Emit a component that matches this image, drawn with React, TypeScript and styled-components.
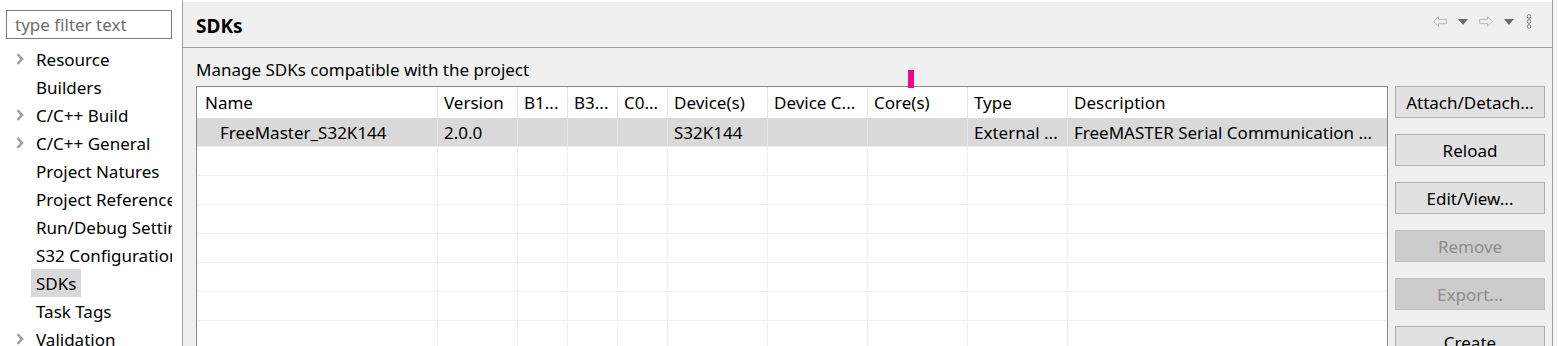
import styled, { createGlobalStyle } from "styled-components";

const GlobalStyle = createGlobalStyle`
  html, body {
    margin: 0;
    padding: 0;
    background: #ffffff;
  }
  body {
    font-family: "Noto Sans", "Open Sans", sans-serif;
    font-size: 17px;
    color: #000000;
  }
`;

const Page = styled.div`
  position: relative;
  display: flex;
  width: 1558px;
  height: 346px;
  overflow: hidden;
`;

const Sidebar = styled.div`
  width: 182px;
  flex-shrink: 0;
  background: #ffffff;
  border-right: 1px solid #a0a0a0;
  display: flex;
  flex-direction: column;
`;

const FilterInput = styled.input`
  box-sizing: border-box;
  margin: 10px 0 0 6px;
  width: 166px;
  height: 30px;
  padding: 0 8px;
  border: 1px solid #7a7a7a;
  font-family: inherit;
  font-size: 17px;
  outline: none;
  &::placeholder {
    color: #6d6d6d;
  }
`;

const Tree = styled.ul`
  list-style: none;
  margin: 6px 0 0 0;
  padding: 0;
  width: 172px;
  overflow: hidden;
`;

const TreeRow = styled.li`
  display: flex;
  align-items: center;
  height: 28px;
  white-space: nowrap;
`;

const Chevron = styled.span`
  width: 31px;
  flex-shrink: 0;
  display: flex;
  justify-content: flex-end;
  padding-right: 7px;
  box-sizing: border-box;
`;

const TreeLabel = styled.span<{ $selected?: boolean }>`
  display: flex;
  align-items: center;
  height: 28px;
  padding: 0 5px;
  background: ${(p) => (p.$selected ? "#d9d9d9" : "transparent")};
`;

const Main = styled.div`
  flex: 1;
  display: flex;
  flex-direction: column;
  background: #f0f0f0;
  border-top: 2px solid #ffffff;
  min-width: 0;
`;

const Header = styled.div`
  height: 46px;
  box-sizing: border-box;
  border-bottom: 1px solid #a0a0a0;
  display: flex;
  align-items: center;
  justify-content: space-between;
  padding: 0 14px 0 13px;
`;

const Title = styled.h1`
  margin: 2px 0 0 0;
  font-size: 19px;
  font-weight: 700;
`;

const NavIcons = styled.div`
  display: flex;
  align-items: center;
  margin-top: -6px;
`;

const IconSlot = styled.span<{ $w: number }>`
  display: flex;
  width: ${(p) => p.$w}px;
  justify-content: center;
`;

const Body = styled.div`
  flex: 1;
  display: flex;
  flex-direction: column;
  padding: 0 7px 0 13px;
  min-height: 0;
`;

const Caption = styled.div`
  height: 38px;
  display: flex;
  align-items: center;
  padding-top: 4px;
  box-sizing: border-box;
`;

const Content = styled.div`
  flex: 1;
  display: flex;
  gap: 7px;
  min-height: 0;
`;

const Table = styled.div`
  flex: 1;
  border: 1px solid #828790;
  border-bottom: none;
  background: #ffffff;
  display: grid;
  grid-template-columns: 241px 80px 50px 50px 50px 100px 100px 100px 100px 1fr;
  grid-template-rows: 31px;
  grid-auto-rows: 29px;
  align-content: start;
`;

const HeadCell = styled.div<{ $pad?: number; $last?: boolean }>`
  display: flex;
  align-items: center;
  padding-left: ${(p) => p.$pad ?? 6}px;
  border-right: ${(p) => (p.$last ? "none" : "1px solid #e5e5e5")};
  white-space: nowrap;
  overflow: hidden;
`;

const Cell = styled.div<{ $pad?: number; $selected?: boolean; $last?: boolean }>`
  display: flex;
  align-items: center;
  padding-left: ${(p) => p.$pad ?? 6}px;
  background: ${(p) => (p.$selected ? "#d9d9d9" : "#ffffff")};
  border-right: ${(p) =>
    p.$last ? "none" : `1px solid ${p.$selected ? "#e6e6e6" : "#f0f0f0"}`};
  border-bottom: 1px solid #f0f0f0;
  white-space: nowrap;
  overflow: hidden;
`;

const Buttons = styled.div`
  width: 150px;
  display: flex;
  flex-direction: column;
  gap: 16px;
`;

const Button = styled.button<{ $disabled?: boolean }>`
  height: 32px;
  flex-shrink: 0;
  box-sizing: border-box;
  font-family: inherit;
  font-size: 17px;
  color: ${(p) => (p.$disabled ? "#8d8d8d" : "#000000")};
  background: ${(p) => (p.$disabled ? "#cccccc" : "#e1e1e1")};
  border: 1px solid ${(p) => (p.$disabled ? "#bfbfbf" : "#adadad")};
  padding: 0;
`;

const RightEdge = styled.div`
  width: 5px;
  flex-shrink: 0;
  background: #f5f5f5;
  border-left: 1px solid #a0a0a0;
`;

const Marker = styled.div`
  position: absolute;
  left: 908px;
  top: 70px;
  width: 6px;
  height: 18px;
  background: #ec0a88;
`;

const tree = [
  { label: "Resource", arrow: true },
  { label: "Builders" },
  { label: "C/C++ Build", arrow: true },
  { label: "C/C++ General", arrow: true },
  { label: "Project Natures" },
  { label: "Project References" },
  { label: "Run/Debug Settings" },
  { label: "S32 Configuration" },
  { label: "SDKs", selected: true },
  { label: "Task Tags" },
  { label: "Validation", arrow: true },
];

const columns = [
  "Name",
  "Version",
  "B1...",
  "B3...",
  "C0...",
  "Device(s)",
  "Device C...",
  "Core(s)",
  "Type",
  "Description",
];

const sdkRow = [
  "FreeMaster_S32K144",
  "2.0.0",
  "",
  "",
  "",
  "S32K144",
  "",
  "",
  "External ...",
  "FreeMASTER Serial Communication ...",
];

const buttons = [
  { label: "Attach/Detach..." },
  { label: "Reload" },
  { label: "Edit/View..." },
  { label: "Remove", disabled: true },
  { label: "Export...", disabled: true },
  { label: "Create" },
];

const ChevronIcon = () => (
  <svg width="8" height="12" viewBox="0 0 8 12">
    <path d="M1.5 1.2 L6 6 L1.5 10.8" fill="none" stroke="#a0a0a0" strokeWidth="2.6" />
  </svg>
);

const ArrowLeft = () => (
  <svg width="14" height="11" viewBox="0 0 14 11">
    <path
      d="M0.7 5.5 L5.5 0.7 L5.5 3.3 L13.3 3.3 L13.3 7.7 L5.5 7.7 L5.5 10.3 Z"
      fill="none"
      stroke="#b5b5b5"
      strokeWidth="1"
    />
  </svg>
);

const ArrowRight = () => (
  <svg width="14" height="11" viewBox="0 0 14 11">
    <path
      d="M13.3 5.5 L8.5 0.7 L8.5 3.3 L0.7 3.3 L0.7 7.7 L8.5 7.7 L8.5 10.3 Z"
      fill="none"
      stroke="#b5b5b5"
      strokeWidth="1"
    />
  </svg>
);

const Triangle = () => (
  <svg width="10" height="6" viewBox="0 0 10 6">
    <path d="M0 0 L10 0 L5 6 Z" fill="#6a6a6a" />
  </svg>
);

const Dots = () => (
  <svg width="6" height="15" viewBox="0 0 6 15">
    <circle cx="3" cy="2.5" r="1.8" fill="none" stroke="#7a7a7a" strokeWidth="1" />
    <circle cx="3" cy="7.5" r="1.8" fill="none" stroke="#7a7a7a" strokeWidth="1" />
    <circle cx="3" cy="12.5" r="1.8" fill="none" stroke="#7a7a7a" strokeWidth="1" />
  </svg>
);

export default function App() {
  const emptyRows = 7;
  return (
    <>
      <GlobalStyle />
      <Page>
        <Sidebar>
          <FilterInput placeholder="type filter text" />
          <Tree>
            {tree.map((item) => (
              <TreeRow key={item.label}>
                <Chevron>{item.arrow && <ChevronIcon />}</Chevron>
                <TreeLabel $selected={item.selected}>{item.label}</TreeLabel>
              </TreeRow>
            ))}
          </Tree>
        </Sidebar>
        <Main>
          <Header>
            <Title>SDKs</Title>
            <NavIcons>
              <IconSlot $w={24}>
                <ArrowLeft />
              </IconSlot>
              <IconSlot $w={22}>
                <Triangle />
              </IconSlot>
              <IconSlot $w={24}>
                <ArrowRight />
              </IconSlot>
              <IconSlot $w={22}>
                <Triangle />
              </IconSlot>
              <IconSlot $w={18}>
                <Dots />
              </IconSlot>
            </NavIcons>
          </Header>
          <Body>
            <Caption>Manage SDKs compatible with the project</Caption>
            <Content>
              <Table>
                {columns.map((c, i) => (
                  <HeadCell key={c} $pad={i === 0 ? 8 : 6} $last={i === columns.length - 1}>
                    {c}
                  </HeadCell>
                ))}
                {sdkRow.map((v, i) => (
                  <Cell
                    key={"s" + i}
                    $selected
                    $pad={i === 0 ? 23 : 6}
                    $last={i === sdkRow.length - 1}
                  >
                    {v}
                  </Cell>
                ))}
                {Array.from({ length: emptyRows }).map((_, r) =>
                  columns.map((c, i) => (
                    <Cell key={r + c} $last={i === columns.length - 1} />
                  ))
                )}
              </Table>
              <Buttons>
                {buttons.map((b) => (
                  <Button key={b.label} $disabled={b.disabled}>
                    {b.label}
                  </Button>
                ))}
              </Buttons>
            </Content>
          </Body>
        </Main>
        <RightEdge />
        <Marker />
      </Page>
    </>
  );
}
